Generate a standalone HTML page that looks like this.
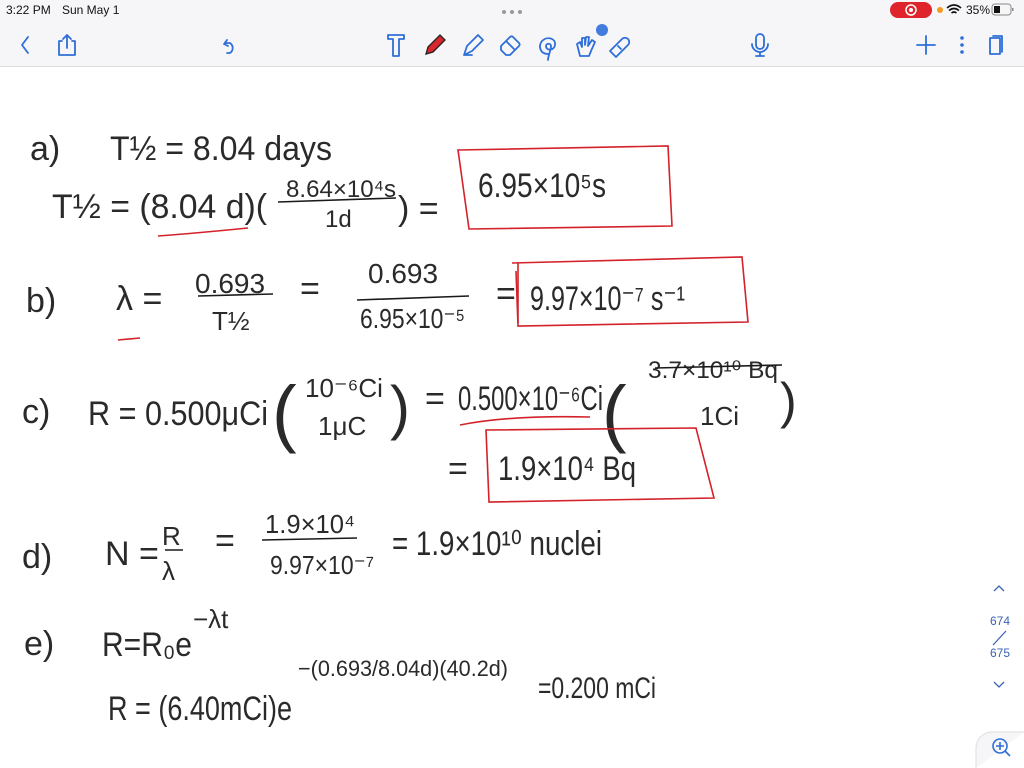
<!DOCTYPE html>
<html><head><meta charset="utf-8"><style>
html,body{margin:0;padding:0;width:1024px;height:768px;overflow:hidden;background:#fff;font-family:"Liberation Sans",sans-serif}
.top{position:absolute;left:0;top:0;width:1024px;height:66px;background:#f6f6f8;border-bottom:1px solid #dcdcdf}
svg{position:absolute;left:0;top:0}
.h{font-family:"Liberation Sans Narrow","Liberation Sans",sans-serif;fill:#2a2a2a;font-weight:normal}
</style></head><body>
<div class="top"></div>
<svg width="1024" height="768" viewBox="0 0 1024 768">
<text x="6" y="14" font-size="12" fill="#111">3:22 PM</text>
<text x="62" y="14" font-size="12" fill="#111">Sun May 1</text>
<g fill="#9a9a9a"><circle cx="504" cy="12" r="2"/><circle cx="512" cy="12" r="2"/><circle cx="520" cy="12" r="2"/></g>
<rect x="890" y="2" width="42" height="16" rx="8" fill="#e0242c"/>
<circle cx="911" cy="10" r="5" fill="none" stroke="#fff" stroke-width="1.5"/><circle cx="911" cy="10" r="2" fill="#fff"/>
<circle cx="940" cy="10" r="3" fill="#f29b1d"/>
<path d="M947 8 q7 -6 14 0 M949 10.5 q5 -4 10 0 M951.5 13 q2.5 -2 5 0" stroke="#111" stroke-width="1.6" fill="none"/>
<text x="966" y="14" font-size="12" fill="#111">35%</text>
<rect x="992" y="4" width="19" height="11" rx="3" fill="none" stroke="#888"/><rect x="994" y="6" width="6" height="7" fill="#111"/><rect x="1012" y="8" width="1.5" height="3" fill="#888"/>
<g stroke="#2f6fd8" stroke-width="1.8" fill="none" stroke-linecap="round" stroke-linejoin="round">
<path d="M28 37 l-6 8 6 8"/>
<path d="M62 41 h-3 v14 h16 v-14 h-3 M67 35 v13 M63 39 l4-4 4 4"/>
<path d="M227 40 l-3 4 4 2 M225 43 h5 a6 6 0 0 1 0 10 h-3"/>
<path d="M388 35 h16 v4 h-5 v17 h-6 v-17 h-5 z"/>
<path d="M464 55 l3-9 11-11 5 5 -11 11 z M464 55 h8"/>
<path d="M501 46 l9-9 a2 2 0 0 1 3 0 l6 6 a2 2 0 0 1 0 3 l-9 9 h-4 l-5-5 z M506 41 l8 8"/>
<path d="M548 54 c-8 0 -10-8 -6-13 5-5 14-3 13 4 -1 6-9 6-9 1 0-3 5-3 5 0 0 4-3 10-3 14"/>
<path d="M580 56 l-3-12 3-2 2 5 v-9 h3 v7 l1-8 h3 l-1 9 4-6 3 2 -4 9 -2 5 z"/>
<path d="M613 54 l-3-3 12-12 a4 4 0 0 1 6 6 l-12 12 z M618 46 l3 3"/>
<path d="M756 38 a4 4 0 0 1 8 0 v7 a4 4 0 0 1 -8 0 z M752 44 a8 8 0 0 0 16 0 M760 52 v4 M756 56 h8"/>
<path d="M926 36 v18 M917 45 h18"/>
<path d="M990 38 h10 v16 h-10 z M993 36 h9 v16"/>
</g>
<path d="M426 54 l2-7 12-12 5 5 -12 12 z" fill="#d8262c" stroke="#222" stroke-width="1.3"/>
<circle cx="602" cy="30" r="6" fill="#2f6fd8" opacity="0.9"/>
<g fill="#2f6fd8"><circle cx="962" cy="38" r="1.8"/><circle cx="962" cy="45" r="1.8"/><circle cx="962" cy="52" r="1.8"/></g>
<path d="M994 591 l5-5 5 5 M994 682 l5 5 5-5" stroke="#3a62b5" stroke-width="1.3" fill="none"/>
<text x="1000" y="625" font-size="12" fill="#3a62b5" text-anchor="middle">674</text>
<path d="M993 645 l13-14" stroke="#3a62b5" stroke-width="1.2"/>
<text x="1000" y="657" font-size="12" fill="#3a62b5" text-anchor="middle">675</text>
<path d="M976 768 v-20 a16 16 0 0 1 16-16 h32" fill="#f6f6f8" stroke="#ddd"/>
<circle cx="1000" cy="746" r="7" fill="none" stroke="#2f6fd8" stroke-width="1.6"/><path d="M1000 742 v8 M996 746 h8 M1005 751 l5 5" stroke="#2f6fd8" stroke-width="1.6"/>
<g class="h" font-size="34">
<text x="30" y="160">a)</text>
<text x="110" y="160" textLength="222" lengthAdjust="spacingAndGlyphs">T½ = 8.04 days</text>
<text x="52" y="218" textLength="215" lengthAdjust="spacingAndGlyphs">T½ = (8.04 d)(</text>
<text x="286" y="197" font-size="24" textLength="110" lengthAdjust="spacingAndGlyphs">8.64×10⁴s</text>
<text x="325" y="227" font-size="24">1d</text>
<text x="398" y="220">)  =</text>
<text x="478" y="197" textLength="128" lengthAdjust="spacingAndGlyphs">6.95×10⁵s</text>
<text x="26" y="312">b)</text>
<text x="116" y="310">λ =</text>
<text x="195" y="293" font-size="28">0.693</text>
<text x="212" y="330" font-size="26">T½</text>
<text x="300" y="300">=</text>
<text x="368" y="283" font-size="28">0.693</text>
<text x="360" y="328" font-size="28" textLength="105" lengthAdjust="spacingAndGlyphs">6.95×10⁻⁵</text>
<text x="496" y="305">=</text>
<text x="530" y="310" textLength="155" lengthAdjust="spacingAndGlyphs">9.97×10⁻⁷ s⁻¹</text>
<text x="22" y="423">c)</text>
<text x="88" y="425" textLength="180" lengthAdjust="spacingAndGlyphs">R = 0.500μCi</text>
<text x="272" y="438" font-size="74">(</text>
<text x="305" y="397" font-size="26">10⁻⁶Ci</text>
<text x="318" y="435" font-size="26">1μC</text>
<text x="390" y="428" font-size="60">)</text>
<text x="425" y="410">=</text>
<text x="458" y="410" textLength="145" lengthAdjust="spacingAndGlyphs">0.500×10⁻⁶Ci</text>
<text x="602" y="438" font-size="74">(</text>
<text x="648" y="378" font-size="24" textLength="130" lengthAdjust="spacingAndGlyphs">3.7×10¹⁰ Bq</text>
<text x="700" y="425" font-size="26">1Ci</text>
<text x="780" y="418" font-size="50">)</text>
<text x="448" y="480">=</text>
<text x="498" y="480" textLength="138" lengthAdjust="spacingAndGlyphs">1.9×10⁴ Bq</text>
<text x="22" y="568">d)</text>
<text x="105" y="565">N =</text>
<text x="162" y="545" font-size="26">R</text>
<text x="162" y="580" font-size="26">λ</text>
<text x="215" y="552">=</text>
<text x="265" y="533" font-size="26" textLength="90" lengthAdjust="spacingAndGlyphs">1.9×10⁴</text>
<text x="270" y="574" font-size="26" textLength="104" lengthAdjust="spacingAndGlyphs">9.97×10⁻⁷</text>
<text x="392" y="555" textLength="210" lengthAdjust="spacingAndGlyphs">= 1.9×10¹⁰ nuclei</text>
<text x="24" y="655">e)</text>
<text x="102" y="656" textLength="90" lengthAdjust="spacingAndGlyphs">R=R₀e</text>
<text x="193" y="628" font-size="26">−λt</text>
<text x="108" y="720" textLength="184" lengthAdjust="spacingAndGlyphs">R = (6.40mCi)e</text>
<text x="298" y="676" font-size="22" textLength="210" lengthAdjust="spacingAndGlyphs">−(0.693/8.04d)(40.2d)</text>
<text x="538" y="698" font-size="30" textLength="118" lengthAdjust="spacingAndGlyphs">=0.200 mCi</text>
</g>
<g stroke="#1a1a1a" stroke-width="1.6" fill="none">
<path d="M198 296 l75 -2 M357 300 l112 -4 M278 202 l118 -4 M655 368 l127 -3 M165 550 l18 0 M262 540 l95 -2"/>
</g>
<g stroke="#d4222a" stroke-width="1.6" fill="none">
<path d="M158 236 q40 -3 90 -8"/>
<path d="M118 340 l22 -2"/>
<path d="M460 425 q50 -10 130 -8"/>
<path d="M458 150 l210 -4 4 80 -203 3 z"/>
<path d="M512 263 l230 -6 6 65 -230 4 -2 -55"/>
<path d="M518 263 v60"/>
<path d="M486 430 l210 -2 18 70 -225 4 z"/>
</g>
</svg>
</body></html>
